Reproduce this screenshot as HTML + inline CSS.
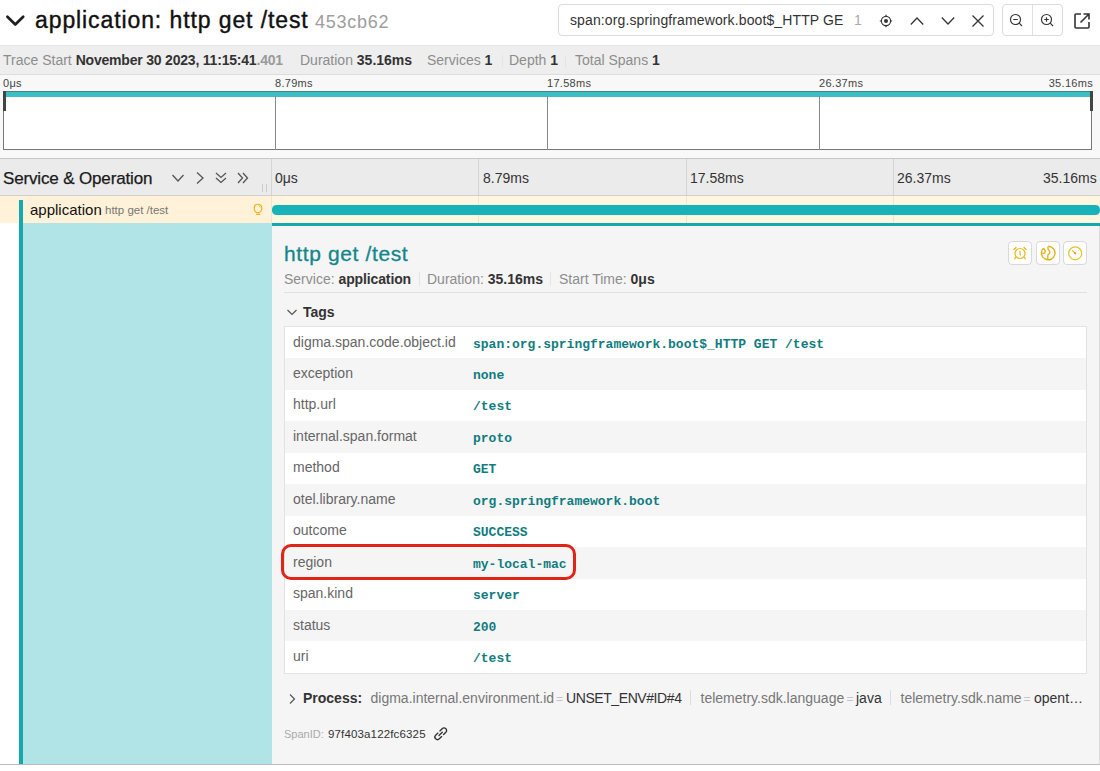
<!DOCTYPE html>
<html><head><meta charset="utf-8">
<style>
*{box-sizing:border-box;margin:0;padding:0}
html,body{width:1100px;height:771px;overflow:hidden;background:#fff;font-family:"Liberation Sans",sans-serif;color:#333}
.a{position:absolute;white-space:pre}
.t{line-height:1}
.lab{color:#8d8d8d}
.val{color:#333;font-weight:bold}
.key{color:#666;font-size:14px}
.mono{font-family:"Liberation Mono",monospace;font-weight:bold;font-size:13px;color:#107c80}
</style></head><body>
<!-- HEADER -->
<svg class="a" style="left:5px;top:13px" width="22" height="16" viewBox="0 0 22 16"><path d="M2.4 3.8 L10.3 11.5 L18.2 3.8" fill="none" stroke="#1f1f1f" stroke-width="2.7" stroke-linecap="round" stroke-linejoin="round"/></svg>
<div class="a t" style="left:35px;top:9px;font-size:23px;color:#111;letter-spacing:0.9px;-webkit-text-stroke:0.4px #111">application: http get /test</div>
<div class="a t" style="left:315px;top:13px;font-size:18px;color:#9e9e9e;letter-spacing:0.75px">453cb62</div>

<div class="a" style="left:558px;top:4px;width:436px;height:32px;border:1px solid #dcdcdc;border-radius:4px;background:#fff"></div>
<div class="a t" style="left:570px;top:13px;font-size:14px;color:#333;letter-spacing:0.12px">span:org.springframework.boot$_HTTP GE</div>
<div class="a t" style="left:854px;top:13px;font-size:14px;color:#aaa">1</div>
<!-- search icons -->
<svg class="a" style="left:878px;top:13px" width="16" height="16" viewBox="0 0 16 16"><circle cx="8" cy="8" r="4.6" fill="none" stroke="#333" stroke-width="1.15"/><circle cx="8" cy="8" r="2" fill="#333"/><path d="M8 1.8v1.8M8 12.4v1.8M1.8 8h1.8M12.4 8h1.8" stroke="#333" stroke-width="1.15"/></svg>
<svg class="a" style="left:909px;top:13px" width="16" height="16" viewBox="0 0 16 16"><path d="M1.8 11.5 L8 5 L14.2 11.5" fill="none" stroke="#333" stroke-width="1.25"/></svg>
<svg class="a" style="left:940px;top:13px" width="16" height="16" viewBox="0 0 16 16"><path d="M1.8 4.5 L8 11 L14.2 4.5" fill="none" stroke="#333" stroke-width="1.25"/></svg>
<svg class="a" style="left:970px;top:13px" width="16" height="16" viewBox="0 0 16 16"><path d="M2.5 2.5 L13.5 13.5 M13.5 2.5 L2.5 13.5" fill="none" stroke="#333" stroke-width="1.25"/></svg>
<div class="a" style="left:1002px;top:4px;width:61px;height:32px;border:1px solid #dcdcdc;border-radius:4px;background:#fff"></div>
<div class="a" style="left:1032px;top:5px;width:1px;height:30px;background:#e0e0e0"></div>
<svg class="a" style="left:1008px;top:12px" width="16" height="16" viewBox="0 0 16 16"><circle cx="7.5" cy="7.5" r="5" fill="none" stroke="#333" stroke-width="1.15"/><path d="M5.2 7.5h4.6M11.2 11.2 L14 14" stroke="#333" stroke-width="1.15"/></svg>
<svg class="a" style="left:1039px;top:12px" width="16" height="16" viewBox="0 0 16 16"><circle cx="7.5" cy="7.5" r="5" fill="none" stroke="#333" stroke-width="1.15"/><path d="M5.2 7.5h4.6M7.5 5.2v4.6M11.2 11.2 L14 14" stroke="#333" stroke-width="1.15"/></svg>
<svg class="a" style="left:1073px;top:12px" width="18" height="18" viewBox="0 0 18 18"><path d="M8 2 H3 Q2 2 2 3 V15 Q2 16 3 16 H15 Q16 16 16 15 V10" fill="none" stroke="#333" stroke-width="1.6"/><path d="M7.5 10.5 L15.5 2.5 M10.5 2 H16 V7.5" fill="none" stroke="#333" stroke-width="1.6"/></svg>

<!-- OVERVIEW BAR -->
<div class="a" style="left:0;top:45px;width:1100px;height:30px;background:#eee;border-top:1px solid #e6e6e6;border-bottom:1px solid #ddd"></div>
<div class="a t" style="left:3px;top:53px;font-size:14px"><span class="lab">Trace Start </span><span class="val" style="letter-spacing:-0.2px">November 30 2023, 11:15:41</span><span style="color:#9a9a9a;font-weight:bold;letter-spacing:-0.2px">.401</span></div>
<div class="a t" style="left:300px;top:53px;font-size:14px"><span class="lab">Duration </span><span class="val">35.16ms</span></div>
<div class="a t" style="left:427px;top:53px;font-size:14px"><span class="lab">Services </span><span class="val">1</span></div>
<div class="a" style="left:502px;top:55px;width:1px;height:12px;background:#e4e4e4"></div>
<div class="a t" style="left:509px;top:53px;font-size:14px"><span class="lab">Depth </span><span class="val">1</span></div>
<div class="a" style="left:565px;top:55px;width:1px;height:12px;background:#e4e4e4"></div>
<div class="a t" style="left:575px;top:53px;font-size:14px"><span class="lab">Total Spans </span><span class="val">1</span></div>

<!-- MINIMAP -->
<div class="a" style="left:0;top:75px;width:1100px;height:84px;background:#f8f8f8;border-bottom:1px solid #c8c8c8"></div>
<div class="a t" style="left:3px;top:78px;font-size:11px;color:#444;letter-spacing:0.3px">0μs</div>
<div class="a t" style="left:275px;top:78px;font-size:11px;color:#444;letter-spacing:0.3px">8.79ms</div>
<div class="a t" style="left:547px;top:78px;font-size:11px;color:#444;letter-spacing:0.3px">17.58ms</div>
<div class="a t" style="left:819px;top:78px;font-size:11px;color:#444;letter-spacing:0.3px">26.37ms</div>
<div class="a t" style="right:7px;top:78px;font-size:11px;color:#444;letter-spacing:0.3px">35.16ms</div>
<div class="a" style="left:3px;top:91px;width:1089px;height:59px;background:#fff;border:1px solid #777;border-top:none"></div>
<div class="a" style="left:3px;top:91px;width:1089px;height:6px;background:#3bbfc4;border-top:1px solid #4a7f82"></div>
<div class="a" style="left:275px;top:96px;width:1px;height:54px;background:#888"></div>
<div class="a" style="left:547px;top:96px;width:1px;height:54px;background:#888"></div>
<div class="a" style="left:819px;top:96px;width:1px;height:54px;background:#888"></div>
<div class="a" style="left:3px;top:91px;width:3px;height:20px;background:#444"></div>
<div class="a" style="left:1090px;top:91px;width:3px;height:20px;background:#444"></div>

<!-- SERVICE HEADER -->
<div class="a" style="left:0;top:159px;width:1100px;height:37px;background:#ebebeb;border-bottom:1px solid #cfcfcf"></div>
<div class="a t" style="left:3px;top:170px;font-size:17px;color:#1a1a1a;letter-spacing:-0.15px;-webkit-text-stroke:0.25px #1a1a1a">Service &amp; Operation</div>
<svg class="a" style="left:170px;top:170px" width="16" height="16" viewBox="0 0 16 16"><path d="M2.5 5 L8 11 L13.5 5" fill="none" stroke="#555" stroke-width="1.3"/></svg>
<svg class="a" style="left:192px;top:170px" width="16" height="16" viewBox="0 0 16 16"><path d="M5 2.5 L11 8 L5 13.5" fill="none" stroke="#555" stroke-width="1.3"/></svg>
<svg class="a" style="left:213px;top:170px" width="16" height="16" viewBox="0 0 16 16"><path d="M3 3 L8 7.5 L13 3 M3 8 L8 12.5 L13 8" fill="none" stroke="#555" stroke-width="1.3"/></svg>
<svg class="a" style="left:235px;top:170px" width="16" height="16" viewBox="0 0 16 16"><path d="M3 3 L7.5 8 L3 13 M8 3 L12.5 8 L8 13" fill="none" stroke="#555" stroke-width="1.3"/></svg>
<div class="a" style="left:262px;top:184px;width:1px;height:8px;background:#ccc"></div>
<div class="a" style="left:266px;top:184px;width:1px;height:8px;background:#ccc"></div>
<div class="a" style="left:271px;top:159px;width:1px;height:36px;background:#d4d4d4"></div>
<div class="a t" style="left:275px;top:171px;font-size:14px;color:#333">0μs</div>
<div class="a" style="left:478px;top:159px;width:1px;height:36px;background:#d4d4d4"></div>
<div class="a t" style="left:483px;top:171px;font-size:14px;color:#333">8.79ms</div>
<div class="a" style="left:686px;top:159px;width:1px;height:36px;background:#d4d4d4"></div>
<div class="a t" style="left:690px;top:171px;font-size:14px;color:#333">17.58ms</div>
<div class="a" style="left:893px;top:159px;width:1px;height:36px;background:#d4d4d4"></div>
<div class="a t" style="left:897px;top:171px;font-size:14px;color:#333">26.37ms</div>
<div class="a t" style="left:1043px;top:171px;font-size:14px;color:#333">35.16ms</div>

<!-- SPAN ROW -->
<div class="a" style="left:0;top:196px;width:272px;height:27px;background:#fff2d9"></div>
<div class="a" style="left:272px;top:196px;width:828px;height:27px;background:#fff6df"></div>
<div class="a" style="left:478px;top:196px;width:1px;height:27px;background:#ece6d4"></div>
<div class="a" style="left:686px;top:196px;width:1px;height:27px;background:#ece6d4"></div>
<div class="a" style="left:893px;top:196px;width:1px;height:27px;background:#ece6d4"></div>
<div class="a" style="left:271px;top:196px;width:1px;height:27px;background:#ece6d4"></div>
<div class="a" style="left:19px;top:200px;width:4px;height:564px;background:#17a8ae"></div>
<div class="a t" style="left:30px;top:202px;font-size:15px;color:#111">application</div><div class="a t" style="left:105px;top:205px;font-size:11.5px;color:#777">http get /test</div>
<svg class="a" style="left:252px;top:202px" width="12" height="14" viewBox="0 0 12 14"><path d="M4.6 10.6 C3 9.8 2.2 8.3 2.2 6.5 C2.2 4 3.9 2.2 6 2.2 C8.1 2.2 9.8 4 9.8 6.5 C9.8 8.3 9 9.8 7.4 10.6 Z" fill="none" stroke="#ecb416" stroke-width="1.15"/><path d="M4.1 12.4 H8.3" stroke="#ecb416" stroke-width="1.2"/><path d="M6.6 3.3 L8.8 5.6" stroke="#f2c430" stroke-width="1"/></svg>
<div class="a" style="left:272px;top:204.5px;width:828px;height:10px;background:#17b3b8;border-radius:4.5px"></div>

<!-- DETAIL -->
<div class="a" style="left:23px;top:223px;width:249px;height:541px;background:#b1e4e6"></div>
<div class="a" style="left:272px;top:223px;width:828px;height:3px;background:#17a8ae"></div>
<div class="a" style="left:272px;top:226px;width:828px;height:538px;background:#f5f5f5;border-right:1px solid #ddd"></div>
<div class="a" style="left:0;top:764px;width:1100px;height:1px;background:#bbb"></div>

<div class="a t" style="left:284px;top:243px;font-size:21px;color:#13868b;letter-spacing:0.62px;-webkit-text-stroke:0.3px #13868b">http get /test</div>
<div class="a t" style="left:284px;top:272px;font-size:14px"><span style="color:#8d8d8d">Service: </span><span class="val" style="letter-spacing:-0.12px">application</span></div>
<div class="a" style="left:419px;top:272px;width:1px;height:14px;background:#e4e4e4"></div>
<div class="a t" style="left:427px;top:272px;font-size:14px"><span style="color:#8d8d8d">Duration: </span><span class="val">35.16ms</span></div>
<div class="a" style="left:550px;top:272px;width:1px;height:14px;background:#e4e4e4"></div>
<div class="a t" style="left:559px;top:272px;font-size:14px"><span style="color:#8d8d8d">Start Time: </span><span class="val">0μs</span></div>
<!-- action buttons -->
<div class="a" style="left:1008px;top:241px;width:24px;height:24px;background:#fff;border:1px solid #d9d9d9;border-radius:4px"></div>
<div class="a" style="left:1036px;top:241px;width:24px;height:24px;background:#fff;border:1px solid #d9d9d9;border-radius:4px"></div>
<div class="a" style="left:1063px;top:241px;width:24px;height:24px;background:#fff;border:1px solid #d9d9d9;border-radius:4px"></div>
<svg class="a" style="left:1008px;top:241px" width="24" height="24" viewBox="0 0 24 24"><circle cx="12" cy="12.5" r="5" fill="none" stroke="#e8bb1c" stroke-width="1.2"/><path d="M12 10.2v2.8l0.6 0.8M6 8.5l2-2M18 8.5l-2-2M7.5 16.5l-0.8 1.3M16.5 16.5l0.8 1.3" fill="none" stroke="#e0b21a" stroke-width="1.2" stroke-linecap="round"/></svg>
<svg class="a" style="left:1036px;top:241px" width="24" height="24" viewBox="0 0 24 24"><path d="M12.6 5.2 A6.8 6.8 0 1 1 7.2 7.4" fill="none" stroke="#e0b21a" stroke-width="1.4"/><path d="M7.2 7.4 C8.5 8.2 9.6 9.8 9 11.4 C8.2 12.6 6.4 12.4 5.3 11.8" fill="none" stroke="#e0b21a" stroke-width="1.3"/><path d="M12.6 5.2 C11.6 6.5 12 8.5 13.3 9.8 C14.5 11 13.5 13.2 12 13.8 C11.6 15 11.8 17 11.8 19" fill="none" stroke="#e0b21a" stroke-width="1.3"/></svg>
<svg class="a" style="left:1063px;top:241px" width="24" height="24" viewBox="0 0 24 24"><circle cx="12.2" cy="12.3" r="6.5" fill="none" stroke="#e8c22a" stroke-width="1.2"/><path d="M9.2 9.3 L12.2 12.3" stroke="#e0b21a" stroke-width="1.1"/><circle cx="12.2" cy="12.3" r="1.1" fill="#f0902a"/><path d="M15.6 9.6 l0.8 -0.8" stroke="#e0b21a" stroke-width="1"/></svg>
<div class="a" style="left:284px;top:292px;width:803px;height:1px;background:#e0e0e0"></div>

<!-- TAGS -->
<svg class="a" style="left:286px;top:306px" width="12" height="12" viewBox="0 0 12 12"><path d="M1.5 4 L6 8.5 L10.5 4" fill="none" stroke="#555" stroke-width="1.2"/></svg>
<div class="a t" style="left:303px;top:305px;font-size:14px;font-weight:bold;color:#333">Tags</div>
<div class="a" id="tbl" style="left:284px;top:326px;width:803px;height:348px;background:#fff;border:1px solid #e2e2e2"></div>
<div class="a t key" style="left:293px;top:334.50px">digma.span.code.object.id</div>
<div class="a t mono" style="left:473px;top:337.50px">span:org.springframework.boot$_HTTP GET /test</div>
<div class="a" style="left:285px;top:358.45px;width:801px;height:31.45px;background:#f5f5f5"></div>
<div class="a t key" style="left:293px;top:365.95px">exception</div>
<div class="a t mono" style="left:473px;top:368.95px">none</div>
<div class="a t key" style="left:293px;top:397.40px">http.url</div>
<div class="a t mono" style="left:473px;top:400.40px">/test</div>
<div class="a" style="left:285px;top:421.35px;width:801px;height:31.45px;background:#f5f5f5"></div>
<div class="a t key" style="left:293px;top:428.85px">internal.span.format</div>
<div class="a t mono" style="left:473px;top:431.85px">proto</div>
<div class="a t key" style="left:293px;top:460.30px">method</div>
<div class="a t mono" style="left:473px;top:463.30px">GET</div>
<div class="a" style="left:285px;top:484.25px;width:801px;height:31.45px;background:#f5f5f5"></div>
<div class="a t key" style="left:293px;top:491.75px">otel.library.name</div>
<div class="a t mono" style="left:473px;top:494.75px">org.springframework.boot</div>
<div class="a t key" style="left:293px;top:523.20px">outcome</div>
<div class="a t mono" style="left:473px;top:526.20px">SUCCESS</div>
<div class="a" style="left:285px;top:547.15px;width:801px;height:31.45px;background:#f5f5f5"></div>
<div class="a t key" style="left:293px;top:554.65px">region</div>
<div class="a t mono" style="left:473px;top:557.65px">my-local-mac</div>
<div class="a t key" style="left:293px;top:586.10px">span.kind</div>
<div class="a t mono" style="left:473px;top:589.10px">server</div>
<div class="a" style="left:285px;top:610.05px;width:801px;height:31.45px;background:#f5f5f5"></div>
<div class="a t key" style="left:293px;top:617.55px">status</div>
<div class="a t mono" style="left:473px;top:620.55px">200</div>
<div class="a t key" style="left:293px;top:649.00px">uri</div>
<div class="a t mono" style="left:473px;top:652.00px">/test</div>
<div class="a" style="left:281px;top:544px;width:295px;height:36px;border:3px solid #e02418;border-radius:10px"></div>
<!-- PROCESS -->
<svg class="a" style="left:286px;top:693px" width="12" height="12" viewBox="0 0 12 12"><path d="M4 1.5 L8.5 6 L4 10.5" fill="none" stroke="#555" stroke-width="1.2"/></svg>
<div class="a t" style="left:303px;top:691px;font-size:14px"><span style="font-weight:bold;color:#333">Process:</span></div>
<div class="a t" style="left:370.5px;top:691px;font-size:14px;color:#777">digma.internal.environment.id</div>
<div class="a t" style="left:556px;top:693px;font-size:12px;color:#c4c4c4">=</div>
<div class="a t" style="left:566px;top:691px;font-size:14px;color:#333;letter-spacing:-0.42px">UNSET_ENV#ID#4</div>
<div class="a" style="left:690px;top:690px;width:1px;height:15px;background:#ddd"></div>
<div class="a t" style="left:700.5px;top:691px;font-size:14px;color:#777">telemetry.sdk.language</div>
<div class="a t" style="left:846.5px;top:693px;font-size:12px;color:#c4c4c4">=</div>
<div class="a t" style="left:856px;top:691px;font-size:14px;color:#333">java</div>
<div class="a" style="left:890px;top:690px;width:1px;height:15px;background:#ddd"></div>
<div class="a t" style="left:900.5px;top:691px;font-size:14px;color:#777">telemetry.sdk.name</div>
<div class="a t" style="left:1023.5px;top:693px;font-size:12px;color:#c4c4c4">=</div>
<div class="a t" style="left:1034px;top:691px;font-size:14px;color:#333">opent…</div>
<!-- SPANID -->
<div class="a t" style="left:284px;top:729px;font-size:11px;color:#aaa">SpanID:</div><div class="a t" style="left:328px;top:729px;font-size:11.5px;color:#333;letter-spacing:0.15px">97f403a122fc6325</div>
<svg class="a" style="left:432px;top:726.7px" width="18" height="16" viewBox="0 0 18 16"><path d="M7.9 3.9 L10.16 1.66 A2.6 2.6 0 0 1 13.84 5.34 L11.6 7.6 M5.9 6.1 L3.66 8.16 A2.6 2.6 0 0 0 7.34 11.84 L9.6 9.6 M7 8.6 L10.3 5.3" fill="none" stroke="#333" stroke-width="1.35" stroke-linecap="round"/></svg>
</body></html>
